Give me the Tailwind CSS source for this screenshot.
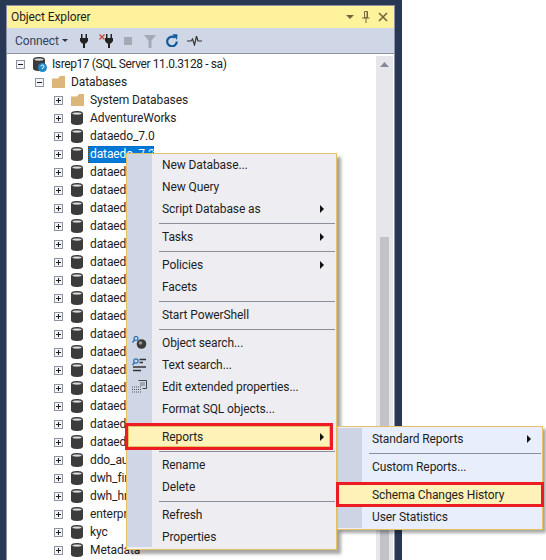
<!DOCTYPE html>
<html lang="en">
<head>
  <meta charset="UTF-8" />
  <title>Object Explorer</title>
  <script src="https://cdn.jsdelivr.net/npm/@tailwindcss/browser@4"></script>
</head>
<body class="bg-white h-[560px] w-[546px] overflow-hidden font-['Roboto',sans-serif] text-[12px] tracking-[-0.1px] text-[#1e1e1e]">
  <svg class="hidden">
    <symbol id="db" viewBox="0 0 12 14">
      <path d="M0 2.500C0 .8 3 0 6 0s6 .8 6 2.500v9C12 13.200 9 14 6 14s-6-.8-6-2.500z" fill="#3c3c3c"/>
      <path d="M1.200 2.600C2.500 1.200 9.500 1.200 10.800 2.600 9.500 4.200 2.500 4.200 1.200 2.600z" fill="#dcdcdc"/>
    </symbol>
    <symbol id="plus" viewBox="0 0 9 9">
      <rect x=".5" y=".5" width="8" height="8" fill="#f4f5f8" stroke="#8d93a3"/>
      <path d="M2 4.500h5M4.500 2v5" stroke="#1e1e1e"/>
    </symbol>
    <symbol id="minus" viewBox="0 0 9 9">
      <rect x=".5" y=".5" width="8" height="8" fill="#f4f5f8" stroke="#8d93a3"/>
      <path d="M2 4.500h5" stroke="#1e1e1e"/>
    </symbol>
    <symbol id="folder" viewBox="0 0 13 12">
      <path d="M0 2.500h6L8 0h5v12H0z" fill="#dcb67a"/>
    </symbol>
    <symbol id="arrow" viewBox="0 0 4 8">
      <path d="M0 0l4 4-4 4z" fill="#111"/>
    </symbol>
    <symbol id="plug" viewBox="0 0 8 14">
      <path d="M1 0h1.500v4H1zM5.500 0H7v4H5.500zM0 4h8v3L6 9.500H5V14H3V9.500H2L0 7z" fill="#222"/>
    </symbol>
  </svg>

  <div class="relative h-full flex">
    <!-- dock window -->
    <div class="w-[402px] h-full bg-[#293955] pt-[5px] pl-[6px] pr-[7px]">
      <div class="h-full flex flex-col border-l border-t border-r border-[#8e93a5]">
        <div class="h-[22px] shrink-0 bg-[#fff29d] flex items-center pl-1 pr-[6px]">
          <span class="flex-1">Object Explorer</span>
          <svg class="w-[8px] h-[4px] mr-[8px]" viewBox="0 0 8 4"><path d="M0 0h8L4 4z" fill="#75633d"/></svg>
          <svg class="w-[8px] h-[12px] mr-[8px]" viewBox="0 0 8 12"><path d="M2.500.5h3v6h-3zM0 7h7.500M4 7v5M5 1v5" fill="none" stroke="#75633d"/></svg>
          <svg class="w-[10px] h-[10px]" viewBox="0 0 10 10"><path d="M1 1l8 8M9 1l-8 8" stroke="#75633d" stroke-width="1.600"/></svg>
        </div>
        <div class="h-[26px] shrink-0 bg-[#cfd6e5] border-b border-[#8e93a5] flex items-center pl-[8px] text-[#33415c]">
          <span class="w-[43px]">Connect</span>
          <svg class="w-[6px] h-[3px] ml-1 mr-[12px]" viewBox="0 0 6 3"><path d="M0 0h6L3 3z" fill="#333"/></svg>
          <svg class="w-[8px] h-[14px] mr-[11px]"><use href="#plug"/></svg>
          <span class="relative w-[14px] h-[14px] mr-[11px]">
            <svg class="absolute left-0 top-0 w-[6px] h-[6px]" viewBox="0 0 6 6"><path d="M.5.5l5 5M5.500.5l-5 5" stroke="#c8452c" stroke-width="1.200"/></svg>
            <svg class="absolute right-0 top-0 w-[8px] h-[14px]"><use href="#plug"/></svg>
          </span>
          <span class="w-[8px] h-[8px] bg-[#a5a9b3] mr-[12px]"></span>
          <svg class="w-[12px] h-[13px] mr-[10px] mt-[2px]" viewBox="0 0 12 13"><path d="M0 0h12L7.500 5.500V13h-3V5.500z" fill="#a5a9b3"/></svg>
          <svg class="w-[12px] h-[13px] mr-[9px]" viewBox="0 0 12 13"><path d="M8.800 3.600A4.800 4.800 0 1 0 10.800 7.500" fill="none" stroke="#0e5a9c" stroke-width="2.200"/><path d="M6.500 0l5 .5-.5 5.500z" fill="#0e5a9c"/></svg>
          <svg class="w-[16px] h-[10px]" viewBox="0 0 16 10"><path d="M0 5h4l1.500-2 2 6 2-9 1.500 5h4" fill="none" stroke="#333" stroke-width="1.200"/></svg>
        </div>
        <div class="flex-1 flex min-h-0 bg-white pt-px pr-px">
          <div id="tree" class="flex-1 overflow-hidden">
            <div class="h-[18px] flex items-center pl-[9px]">
              <svg class="w-[9px] h-[9px]"><use href="#minus"/></svg>
              <span class="relative w-[13px] h-[14px] ml-[8px] mr-[6px]">
                <svg class="block w-[12px] h-[14px]"><use href="#db"/></svg>
                <svg class="absolute -right-[1px] -bottom-[1px] w-[9px] h-[9px]" viewBox="0 0 9 9"><circle cx="4.500" cy="4.500" r="4.500" fill="#1e88c9"/><path d="M3 3.500a1.500 1.500 0 1 1 1.500 1.500v1" fill="none" stroke="#fff"/></svg>
              </span>
              <span class="whitespace-nowrap tracking-[-0.4px]">Isrep17 (SQL Server 11.0.3128 - sa)</span>
            </div>
            <div class="h-[18px] flex items-center pl-[28px]">
              <svg class="w-[9px] h-[9px]"><use href="#minus"/></svg>
              <svg class="w-[13px] h-[12px] ml-[8px] mr-[6px]"><use href="#folder"/></svg>
              <span>Databases</span>
            </div>
            <div class="h-[18px] flex items-center pl-[47px]">
              <svg class="w-[9px] h-[9px]"><use href="#plus"/></svg>
              <svg class="w-[13px] h-[12px] ml-[8px] mr-[6px]"><use href="#folder"/></svg>
              <span>System Databases</span>
            </div>
          </div>
          <!-- scrollbar -->
          <div class="w-[17px] mt-px bg-[#e6e7ec] flex flex-col items-center">
            <svg class="w-[9px] h-[5px] mt-[6px]" viewBox="0 0 9 5"><path d="M0 5h9L4.500 0z" fill="#868999"/></svg>
            <div class="w-[9px] flex-1 mt-[170px] bg-[#c2c3c9]"></div>
          </div>
        </div>
      </div>
    </div>

    <!-- context menu -->
    <div class="absolute left-[126px] top-[153px] w-[211px] h-[397px] bg-[#eeeef2] border border-[#e5c365] shadow-[4px_4px_3px_rgba(0,0,0,0.35)]">
      <div class="absolute left-0 top-0 bottom-[2px] w-[25px] bg-[#cfd6e5]"></div>
      <div class="relative pr-px">
        <div class="h-[22px] flex items-center pl-[35px]">New Database...</div>
        <div class="h-[22px] flex items-center pl-[35px]">New Query</div>
        <div class="h-[22px] flex items-center justify-between pl-[35px] pr-[11px]">Script Database as<svg class="w-[4px] h-[8px]"><use href="#arrow"/></svg></div>
        <div class="h-[6px] flex items-center pl-[32px]"><div class="h-px flex-1 bg-[#8a8f9c]"></div></div>
        <div class="h-[22px] flex items-center justify-between pl-[35px] pr-[11px]">Tasks<svg class="w-[4px] h-[8px]"><use href="#arrow"/></svg></div>
        <div class="h-[6px] flex items-center pl-[32px]"><div class="h-px flex-1 bg-[#8a8f9c]"></div></div>
        <div class="h-[22px] flex items-center justify-between pl-[35px] pr-[11px]">Policies<svg class="w-[4px] h-[8px]"><use href="#arrow"/></svg></div>
        <div class="h-[22px] flex items-center pl-[35px]">Facets</div>
        <div class="h-[6px] flex items-center pl-[32px]"><div class="h-px flex-1 bg-[#8a8f9c]"></div></div>
        <div class="h-[22px] flex items-center pl-[35px]">Start PowerShell</div>
        <div class="h-[6px] flex items-center pl-[32px]"><div class="h-px flex-1 bg-[#8a8f9c]"></div></div>
        <div class="relative h-[22px] flex items-center pl-[35px]">
          <svg class="absolute left-[5px] top-[4px] w-[15px] h-[13px]" viewBox="0 0 15 13"><circle cx="9.500" cy="8" r="4.800" fill="#3a3a3a"/><circle cx="8.500" cy="7" r="1.800" fill="#999"/><circle cx="4" cy="2.500" r="2" fill="none" stroke="#2a6bb0" stroke-width="1.200"/><path d="M.5 6.500l2-2.500" stroke="#2a6bb0" stroke-width="1.300"/></svg>
          Object search...
        </div>
        <div class="relative h-[22px] flex items-center pl-[35px]">
          <svg class="absolute left-[5px] top-[4px] w-[15px] h-[14px]" viewBox="0 0 15 14"><circle cx="4" cy="3" r="2.200" fill="none" stroke="#2a6bb0" stroke-width="1.200"/><path d="M.5 7l2-2.500" stroke="#2a6bb0" stroke-width="1.300"/><path d="M7.500 1.500H14M7.500 4.500H11M1 9h13M1 12.500h8" stroke="#333" stroke-width="1.500"/></svg>
          Text search...
        </div>
        <div class="relative h-[22px] flex items-center pl-[35px]">
          <svg class="absolute left-[5px] top-[4px] w-[15px] h-[14px]" viewBox="0 0 15 14"><path d="M6.500.5h8v8h-4" fill="none" stroke="#444"/><path d="M8 3h5M8 5h5" stroke="#777"/><path d="M0 7h9M0 9.500h9M0 12h9" stroke="#555" stroke-dasharray="1 1"/></svg>
          Edit extended properties...
        </div>
        <div class="h-[22px] flex items-center pl-[35px]">Format SQL objects...</div>
        <div class="h-[6px]"></div>
        <div class="h-[22px]"></div>
        <div class="h-[6px] flex items-center pl-[32px]"><div class="h-px flex-1 bg-[#8a8f9c]"></div></div>
        <div class="h-[22px] flex items-center pl-[35px]">Rename</div>
        <div class="h-[22px] flex items-center pl-[35px]">Delete</div>
        <div class="h-[6px] flex items-center pl-[32px]"><div class="h-px flex-1 bg-[#8a8f9c]"></div></div>
        <div class="h-[22px] flex items-center pl-[35px]">Refresh</div>
        <div class="h-[22px] flex items-center pl-[35px]">Properties</div>
      </div>
    </div>

    <!-- red highlight on Reports -->
    <div class="absolute left-[125px] top-[423px] w-[208px] h-[27px] border-[3px] border-[#ed1c24] flex">
      <div class="flex-1 bg-[#fff2b8] border border-[#e5c365] flex items-center justify-between pl-[33px] pr-[5px]">Reports<svg class="w-[4px] h-[8px]"><use href="#arrow"/></svg></div>
    </div>

    <!-- submenu -->
    <div class="absolute left-[337px] top-[426px] w-[206px] h-[104px] bg-[#e8eefb] border border-[#e5c365] shadow-[3px_3px_3px_rgba(0,0,0,0.35)] py-px">
      <div class="absolute left-0 top-px bottom-px w-[24px] bg-[#cdd5e4]"></div>
      <div class="relative">
        <div class="h-[22px] flex items-center justify-between pl-[34px] pr-[11px]">Standard Reports<svg class="w-[4px] h-[8px]"><use href="#arrow"/></svg></div>
        <div class="h-[6px] flex items-center pl-[31px] pr-px"><div class="h-px flex-1 bg-[#8a8f9c]"></div></div>
        <div class="h-[22px] flex items-center pl-[34px]">Custom Reports...</div>
        <div class="h-[6px]"></div>
        <div class="h-[22px]"></div>
        <div class="h-[22px] flex items-center pl-[34px]">User Statistics</div>
      </div>
    </div>
    <div class="absolute left-[336px] top-[482px] w-[208px] h-[25px] border-[3px] border-[#ed1c24] bg-[#fff2b8] flex items-center pl-[33px]">Schema Changes History</div>
  </div>

  <script>
    // database rows under the two fixed tree nodes
    const names = ['AdventureWorks', 'dataedo_7.0', 'dataedo_7.2'];
    for (let i = 0; i < 16; i++) names.push('dataedo_7.' + (i + 3));
    names.push('ddo_audit', 'dwh_finance', 'dwh_hr', 'enterprise', 'kyc', 'Metadata');
    const tree = document.getElementById('tree');
    names.forEach((name, i) => {
      const label = i === 2
        ? '<span class="bg-[#0078d7] text-white outline-1 outline-dotted outline-[#7a4a00] -outline-offset-1 w-[66px] pl-[2px] -ml-[2px] h-[17px] leading-[16px]">' + name + '</span>'
        : '<span>' + name + '</span>';
      tree.insertAdjacentHTML('beforeend',
        '<div class="h-[18px] flex items-center pl-[47px]">' +
        '<svg class="w-[9px] h-[9px]"><use href="#plus"/></svg>' +
        '<svg class="w-[12px] h-[14px] ml-[8px] mr-[7px]"><use href="#db"/></svg>' +
        label + '</div>');
    });
  </script>
</body>
</html>
